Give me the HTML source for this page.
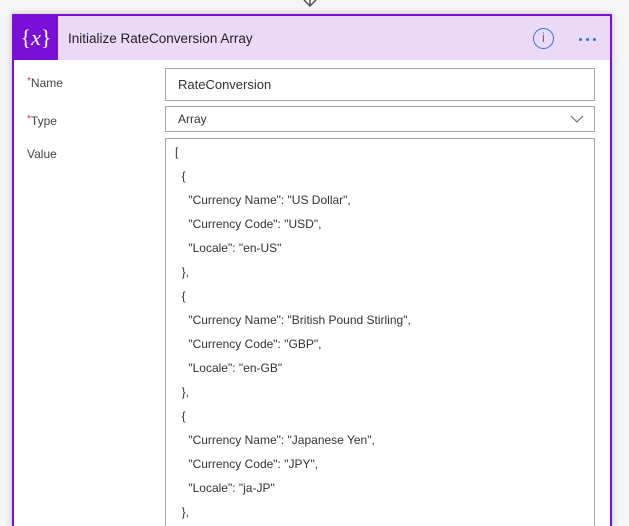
<!DOCTYPE html>
<html style="width:629px;height:526px;overflow:hidden"><head><style>
*{margin:0;padding:0;box-sizing:border-box}
body{width:629px;height:526px;overflow:hidden;background:#f6f6f6;font-family:"Liberation Sans",sans-serif;position:relative;color:#323130}
.card{position:absolute;left:12px;top:14px;width:600px;height:512px;border:2px solid #7a10d6;border-bottom:none;background:#fff;box-shadow:0 0 6px rgba(0,0,0,.25);overflow:hidden}
.hdr{position:absolute;left:0;top:0;right:0;height:44px;background:#ead9f7}
.ic{position:absolute;left:0;top:0;width:44px;height:44px;background:#7a10d6;color:#fff;font-family:"Liberation Serif",serif;font-size:22px;line-height:44px;text-align:center}
.title{position:absolute;left:54px;top:15px;font-size:13.5px;color:#222}
.info{position:absolute;left:519px;top:12px;width:21px;height:21px;border:1.5px solid #2b7cd3;border-radius:50%;color:#2b7cd3;font-size:13px;text-align:center;line-height:18px}
.dots{position:absolute;left:565px;top:21px;height:3px;line-height:0}
.dots i{display:inline-block;width:3px;height:3px;background:#2b7cd3;border-radius:50%;margin-right:4px}
.lbl{position:absolute;left:13px;font-size:12px;color:#444}
.lbl b{color:#d13438;font-weight:normal;font-size:10px;vertical-align:top}
.inp{position:absolute;left:151px;width:430px;border:1px solid #a6a6a6;background:#fff;font-size:13px;padding-left:12px;color:#333}
.code{position:absolute;left:161px;font-size:12px;color:#333;white-space:pre;line-height:24px}
.arrow{position:absolute;left:303px;top:-6px;width:14px;height:14px}
</style></head><body>
<svg class="arrow" viewBox="0 0 14 14"><path d="M7 0V12M1 6L7 12L13 6" stroke="#555" stroke-width="1.5" fill="none"/></svg>
<div class="card">
<div class="hdr">
<div class="ic">{<i>x</i>}</div>
<div class="title">Initialize RateConversion Array</div>
<div class="info">i</div>
<div class="dots"><i></i><i></i><i></i></div>
</div>
<div class="lbl" style="top:60px"><b>*</b>Name</div>
<div class="lbl" style="top:98px"><b>*</b>Type</div>
<div class="lbl" style="top:131px">Value</div>
<div class="inp" style="top:52px;height:33px;line-height:31px">RateConversion</div>
<div class="inp" style="top:90px;height:26px;line-height:24px;font-size:12px">Array<svg style="position:absolute;right:10px;top:8px" width="14" height="8" viewBox="0 0 14 8"><path d="M1 1L7 7L13 1" stroke="#666" fill="none"/></svg></div>
<div class="inp" style="top:122px;height:400px"></div>
<div class="code" style="top:124px">[
  {
    "Currency Name": "US Dollar",
    "Currency Code": "USD",
    "Locale": "en-US"
  },
  {
    "Currency Name": "British Pound Stirling",
    "Currency Code": "GBP",
    "Locale": "en-GB"
  },
  {
    "Currency Name": "Japanese Yen",
    "Currency Code": "JPY",
    "Locale": "ja-JP"
  },</div>
</div>
</body></html>
